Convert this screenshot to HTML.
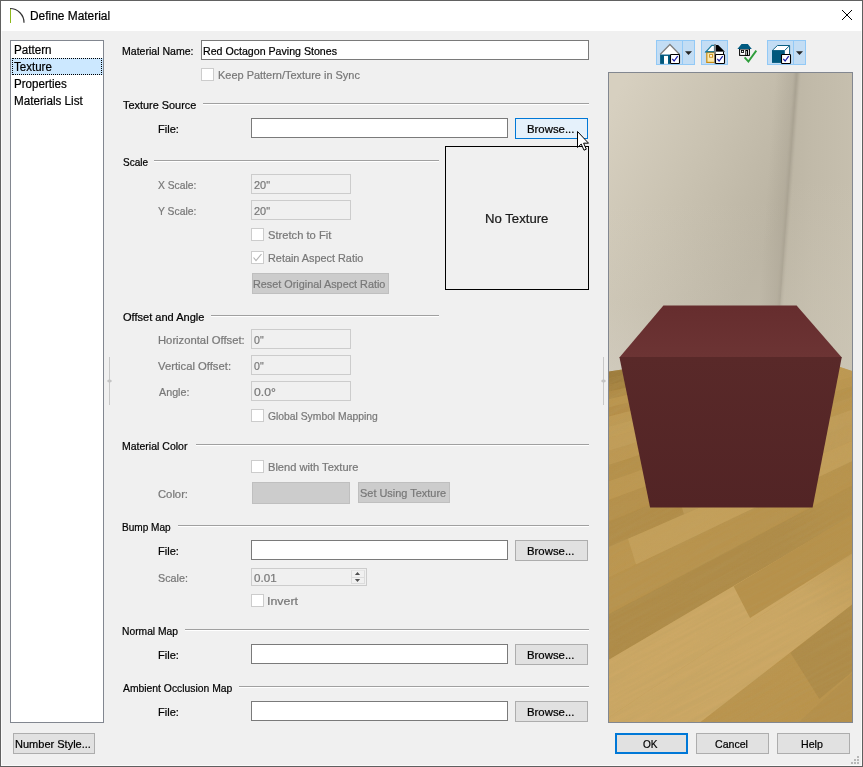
<!DOCTYPE html>
<html><head><meta charset="utf-8"><title>Define Material</title>
<style>
html,body{margin:0;padding:0;background:#f0f0f0;overflow:hidden}
body{width:863px;height:767px;font-family:"Liberation Sans",sans-serif;}
#win{position:relative;width:863px;height:767px;background:#f0f0f0;overflow:hidden}
.a{position:absolute;box-sizing:border-box}
.t{-webkit-text-stroke:0.22px currentColor;position:absolute;white-space:pre;transform-origin:0 50%;font-family:"Liberation Sans",sans-serif}
.in{background:#fff;border:1px solid #7a7a7a}
.ind{background:#f0f0f0;border:1px solid #ccc}
.cb{width:13px;height:13px;background:#fff;border:1px solid #ccc}
.btn{background:#e1e1e1;border:1px solid #adadad}
.btnd{background:#ccc;border:1px solid #bfbfbf}
.hl{height:1px;background:#a0a0a0;box-shadow:0 1px 0 #fff}
.tb{background:#c3ddf4;border:1px solid #92c9f6}

</style></head>
<body>
<div id="win">
<!-- window frame -->
<div class="a" style="left:0;top:0;width:863px;height:31px;background:#fff"></div>
<div class="a" style="left:0;top:0;width:863px;height:1px;background:#616161"></div>
<div class="a" style="left:0;top:0;width:1px;height:767px;background:#616161"></div>
<div class="a" style="left:862px;top:0;width:1px;height:767px;background:#5f5f5f"></div>
<div class="a" style="left:0;top:766px;width:863px;height:1px;background:#5f5f5f"></div>
<div class="a" style="left:861px;top:31px;width:1px;height:735px;background:#fafafa"></div>
<div class="a" style="left:1px;top:765px;width:861px;height:1px;background:#fafafa"></div>
<div class="a" style="left:1px;top:31px;width:1px;height:735px;background:#fafafa"></div>
<!-- title icon -->
<svg class="a" style="left:8px;top:6px" width="20" height="20" viewBox="8 6 20 20">
<line x1="10.5" y1="9" x2="10.5" y2="23" stroke="#8cb81c" stroke-width="1"/>
<path d="M10 8.5 A14 14 0 0 1 24 22.8" fill="none" stroke="#333" stroke-width="1.2"/>
</svg>
<!-- close X -->
<svg class="a" style="left:840px;top:8px" width="14" height="14" viewBox="840 8 14 14">
<path d="M842 10 L852 20 M852 10 L842 20" stroke="#000" stroke-width="1" fill="none"/>
</svg>
<!-- list box -->
<div class="a" style="left:10px;top:40px;width:94px;height:683px;background:#fff;border:1px solid #828790"></div>
<div class="a" style="left:11px;top:58px;width:92px;height:17px;background:#cce8ff"></div>
<div class="a" style="left:12px;top:58px;width:90px;height:17px;border:1px dotted #000"></div>
<!-- Number style button -->
<div class="a btn" style="left:13px;top:733px;width:82px;height:21px"></div>
<!-- splitters -->
<div class="a" style="left:109px;top:357px;width:1px;height:48px;background:#c8c8c8"></div>
<svg class="a" style="left:106px;top:378px" width="7" height="6" viewBox="106 378 7 6"><polygon points="106.8,381 109.5,379 112.2,381 109.5,383" fill="#c4c4c4"/></svg>
<div class="a" style="left:603px;top:357px;width:1px;height:48px;background:#c8c8c8"></div>
<svg class="a" style="left:600px;top:378px" width="7" height="6" viewBox="600 378 7 6"><polygon points="600.8,381 603.5,379 606.2,381 603.5,383" fill="#c4c4c4"/></svg>
<!-- material name -->
<div class="a in" style="left:201px;top:40px;width:388px;height:20px"></div>
<div class="a cb" style="left:201px;top:68px"></div>
<!-- Texture Source -->
<div class="a hl" style="left:203px;top:103px;width:386px"></div>
<div class="a in" style="left:251px;top:118px;width:257px;height:20px"></div>
<div class="a" style="left:515px;top:118px;width:73px;height:21px;background:#e5f1fb;border:1px solid #0078d7"></div>
<!-- Scale -->
<div class="a hl" style="left:154px;top:160px;width:285px"></div>
<div class="a ind" style="left:251px;top:174px;width:100px;height:20px"></div>
<div class="a ind" style="left:251px;top:200px;width:100px;height:20px"></div>
<div class="a cb" style="left:251px;top:228px"></div>
<div class="a cb" style="left:251px;top:251px"></div>
<svg class="a" style="left:251px;top:251px" width="13" height="13"><path d="M2.5 6.5 L5 9.5 L10.5 3" fill="none" stroke="#b4b4b4" stroke-width="1.15"/></svg>
<div class="a btnd" style="left:252px;top:273px;width:137px;height:21px"></div>
<!-- No texture box -->
<div class="a" style="left:445px;top:146px;width:144px;height:144px;border:1px solid #000"></div>
<!-- Offset and Angle -->
<div class="a hl" style="left:211px;top:315px;width:228px"></div>
<div class="a ind" style="left:251px;top:329px;width:100px;height:20px"></div>
<div class="a ind" style="left:251px;top:355px;width:100px;height:20px"></div>
<div class="a ind" style="left:251px;top:381px;width:100px;height:20px"></div>
<div class="a cb" style="left:251px;top:409px"></div>
<!-- Material Color -->
<div class="a hl" style="left:196px;top:444px;width:393px"></div>
<div class="a cb" style="left:251px;top:460px"></div>
<div class="a btnd" style="left:252px;top:482px;width:98px;height:22px"></div>
<div class="a btnd" style="left:358px;top:482px;width:92px;height:21px"></div>
<!-- Bump Map -->
<div class="a hl" style="left:178px;top:525px;width:411px"></div>
<div class="a in" style="left:251px;top:540px;width:257px;height:20px"></div>
<div class="a btn" style="left:515px;top:540px;width:73px;height:21px"></div>
<div class="a ind" style="left:251px;top:568px;width:116px;height:18px"></div>
<div class="a" style="left:351px;top:570px;width:14px;height:14px;border:1px solid #dcdcdc;border-top-color:#e6e6e6"></div>
<div class="a" style="left:352px;top:577px;width:12px;height:1px;background:#dcdcdc"></div>
<svg class="a" style="left:351px;top:568px" width="14" height="18" viewBox="351 568 14 18"><path d="M354.9 575 L360.1 575 L357.5 571.9 Z M354.9 579 L360.1 579 L357.5 582.1 Z" fill="#505050"/></svg>
<div class="a cb" style="left:251px;top:594px"></div>
<!-- Normal Map -->
<div class="a hl" style="left:185px;top:629px;width:404px"></div>
<div class="a in" style="left:251px;top:644px;width:257px;height:20px"></div>
<div class="a btn" style="left:515px;top:644px;width:73px;height:21px"></div>
<!-- AO Map -->
<div class="a hl" style="left:239px;top:686px;width:350px"></div>
<div class="a in" style="left:251px;top:701px;width:257px;height:20px"></div>
<div class="a btn" style="left:515px;top:701px;width:73px;height:21px"></div>
<!-- bottom buttons -->
<div class="a" style="left:615px;top:733px;width:73px;height:21px;background:#e1e1e1;border:2px solid #0078d7"></div>
<div class="a btn" style="left:696px;top:733px;width:73px;height:21px"></div>
<div class="a btn" style="left:777px;top:733px;width:73px;height:21px"></div>
<!-- size grip -->
<svg class="a" style="left:850px;top:755px" width="11" height="11" viewBox="850 755 11 11" shape-rendering="crispEdges">
<g fill="#b8b8b8"><rect x="857" y="756" width="2" height="2"/><rect x="854" y="759" width="2" height="2"/><rect x="857" y="759" width="2" height="2"/><rect x="851" y="762" width="2" height="2"/><rect x="854" y="762" width="2" height="2"/><rect x="857" y="762" width="2" height="2"/></g>
</svg>
<!-- toolbar -->
<div class="a tb" style="left:656px;top:40px;width:39px;height:25px"></div>
<div class="a" style="left:682px;top:40px;width:1px;height:25px;background:#92c9f6"></div>
<div class="a tb" style="left:701px;top:40px;width:27px;height:25px"></div>
<div class="a tb" style="left:767px;top:40px;width:39px;height:25px"></div>
<div class="a" style="left:793px;top:40px;width:1px;height:25px;background:#92c9f6"></div>
<svg class="a" style="left:650px;top:36px" width="160" height="32" viewBox="650 36 160 32">
<path d="M660.1 54.4 L669.9 44.5 L679.6 54.4 Z" fill="#fff"/>
<path d="M660.1 54.5 L669.9 44.5 L679.6 54.5" fill="none" stroke="#808080" stroke-width="1.3" stroke-linejoin="miter"/>
<rect x="660.1" y="54.6" width="10" height="9.3" fill="#00587d"/>
<rect x="664" y="55.9" width="4" height="8" fill="#fff"/>
<rect x="670.5" y="54.5" width="9" height="9" rx="0.8" fill="#fff" stroke="#000" stroke-width="1.1"/><path d="M672.3 58.8 L674.1 61.0 L677.7 56.1" fill="none" stroke="#1c1ca6" stroke-width="1.2" stroke-linejoin="miter"/>
<path d="M685 51.2 L692 51.2 L688.5 55.0 Z" fill="#262626"/>
<path d="M705.9 51.8 L711.8 45.3 L714.5 45.3 L714.5 51.8 Z" fill="#fff" stroke="#187797" stroke-width="1.2" stroke-linejoin="miter"/>
<rect x="706.8" y="52.5" width="8" height="9.9" fill="#fbeaae" stroke="#c98a12" stroke-width="1.2"/>
<rect x="705.4" y="51.2" width="9.1" height="1.2" fill="#187797"/>
<rect x="709.6" y="54.6" width="3" height="2.6" fill="#fff" stroke="#c98a12" stroke-width="0.9"/>
<path d="M716 45.1 L718.2 45.1 L724.9 51.8 L716 51.8 Z" fill="#000"/>
<rect x="716" y="51.8" width="7.6" height="3" fill="#fff"/>
<rect x="723" y="51.8" width="1" height="3" fill="#000"/>
<rect x="714.2" y="44.1" width="1.7" height="19.5" fill="#7d7d7d"/>
<rect x="715.5" y="54.5" width="9" height="9" rx="0.8" fill="#fff" stroke="#000" stroke-width="1.1"/><path d="M717.3 58.8 L719.1 61.0 L722.7 56.1" fill="none" stroke="#1c1ca6" stroke-width="1.2" stroke-linejoin="miter"/>
<rect x="739.6" y="49" width="9.8" height="6.4" fill="#fff" stroke="#000" stroke-width="1"/>
<path d="M741.5 44.1 L747.8 44.1 L751.8 49.1 L737.4 49.1 Z" fill="#005a80"/>
<rect x="741.5" y="50.45" width="2.1" height="2.1" fill="#fff" stroke="#000" stroke-width="0.85"/>
<rect x="745.8" y="50.5" width="1.7" height="5" fill="#fff" stroke="#000" stroke-width="1"/>
<path d="M744.6 57.3 L748.4 61.6 L756.3 50.6" fill="none" stroke="#2f9e3c" stroke-width="1.9" stroke-linejoin="miter"/>
<path d="M772 50.3 L777.3 45.1 L790 45.1 L790 56 L784.8 56 L784.8 50.3 Z" fill="#fff"/>
<path d="M772.3 50.4 L777.4 45.5 L789.6 45.5 L789.6 56" fill="none" stroke="#0a5f83" stroke-width="1"/>
<path d="M784.8 50.3 L789.6 45.6" fill="none" stroke="#0a5f83" stroke-width="1"/>
<rect x="772" y="50.1" width="12.8" height="12.8" fill="#00587d"/>
<rect x="781.5" y="54.5" width="9" height="9" rx="0.8" fill="#fff" stroke="#000" stroke-width="1.1"/><path d="M783.3 58.8 L785.1 61.0 L788.7 56.1" fill="none" stroke="#1c1ca6" stroke-width="1.2" stroke-linejoin="miter"/>
<path d="M796 51.2 L803 51.2 L799.5 55.0 Z" fill="#262626"/>
</svg>
<svg class="a" style="left:608px;top:72px" width="245" height="651" viewBox="608 72 245 651">
<defs>
<linearGradient id="wl" gradientUnits="userSpaceOnUse" x1="609" y1="110" x2="790" y2="200"><stop offset="0" stop-color="#d7d0c0"/><stop offset="0.5" stop-color="#c9c2b1"/><stop offset="1" stop-color="#bab3a2"/></linearGradient>
<linearGradient id="wl2" gradientUnits="userSpaceOnUse" x1="0" y1="200" x2="0" y2="372"><stop offset="0" stop-color="#d9d4c9" stop-opacity="0"/><stop offset="0.6" stop-color="#d9d4c9" stop-opacity="0.15"/><stop offset="1" stop-color="#d9d4c9" stop-opacity="0.5"/></linearGradient>
<linearGradient id="wr" gradientUnits="userSpaceOnUse" x1="785" y1="0" x2="852" y2="0"><stop offset="0" stop-color="#bcb5a4"/><stop offset="0.4" stop-color="#c1baa9"/><stop offset="1" stop-color="#c6bfae"/></linearGradient>
<linearGradient id="wr2" gradientUnits="userSpaceOnUse" x1="0" y1="180" x2="0" y2="372"><stop offset="0" stop-color="#d3cdbe" stop-opacity="0"/><stop offset="1" stop-color="#d3cdbe" stop-opacity="0.4"/></linearGradient>
<linearGradient id="cs" x1="0" y1="0" x2="0" y2="1"><stop offset="0" stop-color="#a59e8e" stop-opacity="0.8"/><stop offset="0.6" stop-color="#a59e8e" stop-opacity="0.55"/><stop offset="1" stop-color="#a59e8e" stop-opacity="0.25"/></linearGradient>
<linearGradient id="fl" gradientUnits="userSpaceOnUse" x1="609" y1="372" x2="780" y2="722"><stop offset="0" stop-color="#b7914a"/><stop offset="0.5" stop-color="#bd9750"/><stop offset="1" stop-color="#bc964f"/></linearGradient>
<linearGradient id="ct" gradientUnits="userSpaceOnUse" x1="0" y1="306" x2="0" y2="357"><stop offset="0" stop-color="#662d2e"/><stop offset="1" stop-color="#6c3434"/></linearGradient>
<linearGradient id="cf" gradientUnits="userSpaceOnUse" x1="0" y1="357" x2="0" y2="508"><stop offset="0" stop-color="#592929"/><stop offset="1" stop-color="#522425"/></linearGradient>
<linearGradient id="csl" x1="0" y1="0" x2="1" y2="0"><stop offset="0" stop-color="#a8a191" stop-opacity="0"/><stop offset="1" stop-color="#a8a191" stop-opacity="0.5"/></linearGradient>
<filter id="b3" x="-300%" y="-10%" width="700%" height="120%"><feGaussianBlur stdDeviation="1.3"/></filter>
<linearGradient id="dk" gradientUnits="userSpaceOnUse" x1="609" y1="0" x2="800" y2="0"><stop offset="0" stop-color="#86682f"/><stop offset="0.3" stop-color="#86682f" stop-opacity="0.9"/><stop offset="1" stop-color="#86682f" stop-opacity="0.15"/></linearGradient>
<radialGradient id="mute" gradientUnits="userSpaceOnUse" cx="0" cy="0" r="1" gradientTransform="translate(866 450) scale(95 190)"><stop offset="0" stop-color="#b8934c" stop-opacity="0.65"/><stop offset="0.5" stop-color="#b8934c" stop-opacity="0.5"/><stop offset="1" stop-color="#b8934c" stop-opacity="0"/></radialGradient>
<filter id="grain" x="0" y="0" width="100%" height="100%"><feTurbulence type="fractalNoise" baseFrequency="0.012 0.35" numOctaves="2" seed="7" result="n"/><feColorMatrix in="n" type="matrix" values="0 0 0 0 0.45  0 0 0 0 0.33  0 0 0 0 0.12  0.9 0 0 0 -0.28"/></filter>
<filter id="b2" x="-300%" y="-10%" width="700%" height="120%"><feGaussianBlur stdDeviation="3.2"/></filter>
<filter id="b1" x="-5%" y="-5%" width="110%" height="110%"><feGaussianBlur stdDeviation="0.5"/></filter>
<clipPath id="fc"><polygon points="609,371.5 777,346 852,371 852,722 609,722"/></clipPath>
<clipPath id="pc"><rect x="609" y="73" width="243" height="649"/></clipPath>
</defs>
<g clip-path="url(#pc)">
<rect x="609" y="73" width="243" height="649" fill="#c8c1b0"/>
<polygon points="609,73 797.5,73 777,346 609,372" fill="url(#wl)"/>
<polygon points="609,73 797.5,73 777,346 609,372" fill="url(#wl2)"/>
<polygon points="797.5,73 852,73 852,372 777,346" fill="url(#wr)"/>
<polygon points="797.5,73 852,73 852,372 777,346" fill="url(#wr2)"/>
<g transform="translate(797.5,72) skewX(-4.215)"><rect x="-22" y="-5" width="22" height="290" fill="url(#csl)"/><rect x="-2.2" y="-5" width="3.6" height="290" fill="url(#cs)" filter="url(#b3)"/></g>
<g clip-path="url(#fc)">
<rect x="609" y="340" width="243" height="382" fill="url(#fl)"/>
<g filter="url(#b1)">
<polygon points="1335.0,230.0 -6478.2,1706.0 -6182.7,1706.0" fill="url(#dk)" opacity="0.55"/>
<polygon points="1335.0,230.0 -6182.7,1706.0 -5887.2,1706.0" fill="url(#dk)" opacity="0.55"/>
<polygon points="1335.0,230.0 -5887.2,1706.0 -5591.7,1706.0" fill="url(#dk)" opacity="0.5"/>
<polygon points="1335.0,230.0 -5591.7,1706.0 -5296.2,1706.0" fill="url(#dk)" opacity="0.35"/>
<polygon points="1335.0,230.0 -5296.2,1706.0 -5000.7,1706.0" fill="#96763a" opacity="0.2"/>
<polygon points="1335.0,230.0 -5000.7,1706.0 -4705.2,1706.0" fill="#d8b677" opacity="0.1"/>
<polygon points="1335.0,230.0 -4705.2,1706.0 -4409.7,1706.0" fill="#96763a" opacity="0.08"/>
<polygon points="1335.0,230.0 -4409.7,1706.0 -4114.2,1706.0" fill="#d8b677" opacity="0.22"/>
<polygon points="1335.0,230.0 -4114.2,1706.0 -3818.7,1706.0" fill="#d8b677" opacity="0.32"/>
<polygon points="1335.0,230.0 -3818.7,1706.0 -3523.2,1706.0" fill="#d8b677" opacity="0.3"/>
<polygon points="1335.0,230.0 -3523.2,1706.0 -3227.7,1706.0" fill="#d8b677" opacity="0.15"/>
<polygon points="1335.0,230.0 -3227.7,1706.0 -2932.2,1706.0" fill="#96763a" opacity="0.1"/>
<polygon points="1335.0,230.0 -2932.2,1706.0 -2636.7,1706.0" fill="#d8b677" opacity="0.12"/>
<polygon points="1335.0,230.0 -2636.7,1706.0 -2341.2,1706.0" fill="#96763a" opacity="0.12"/>
<polygon points="1335.0,230.0 -2341.2,1706.0 -2045.7,1706.0" fill="#96763a" opacity="0.28"/>
<polygon points="1335.0,230.0 -1750.2,1706.0 -1454.7,1706.0" fill="#96763a" opacity="0.1"/>
<polygon points="1335.0,230.0 -1454.7,1706.0 -1159.2,1706.0" fill="#96763a" opacity="0.36"/>
<polygon points="1335.0,230.0 -1159.2,1706.0 -863.7,1706.0" fill="#d8b677" opacity="0.55"/>
<polygon points="1335.0,230.0 -863.7,1706.0 -568.2,1706.0" fill="#d8b677" opacity="0.55"/>
<polygon points="1335.0,230.0 -568.2,1706.0 -272.7,1706.0" fill="#96763a" opacity="0.05"/>
<polygon points="1335.0,230.0 -272.7,1706.0 22.8,1706.0" fill="#96763a" opacity="0.18"/>
<polygon points="733.6,586.2 750.0,618.0 870.0,542.2 870.0,504.3" fill="#b7914b"/>
<polygon points="790.4,652.7 819.4,699 870.0,656.9 870.0,590.6" fill="#96763a" opacity="0.3"/>
<rect x="760" y="340" width="100" height="310" fill="url(#mute)"/>
<polygon points="672.0,476.4 870.0,402.8 870.0,433.0 684.0,514.2" fill="#d8b677" opacity="0.3"/>
<g transform="rotate(-28 730 540)"><rect x="400" y="200" width="700" height="700" filter="url(#grain)" opacity="0.5"/></g>
<polygon points="628.0,538.7 870.0,433.0 870.0,452.5 636.0,564.4" fill="#d8b677" opacity="0.28"/>
</g>
</g>
<polygon points="663.4,305.6 796.6,305.6 841.8,357.5 619.4,357.5" fill="url(#ct)"/>
<polygon points="619.4,357 841.8,357 812.6,507.6 650.1,507.6" fill="url(#cf)"/>
</g>
<rect x="608.5" y="72.5" width="244" height="650" fill="none" stroke="#828790" stroke-width="1"/>
</svg>
<!-- cursor -->
<svg class="a" style="left:576px;top:130px" width="14" height="22" viewBox="0 0 14 22">
<path d="M1.5 1.5 L1.5 17.5 L5.2 14 L8 20.2 L10.3 19.2 L7.6 13.2 L12.5 13.2 Z" fill="#fff" stroke="#000" stroke-width="1" stroke-linejoin="miter"/>
</svg>

<span id="title" class="t" style="left:30.00px;top:8.14px;font-size:12px;line-height:16px;color:#000;transform:scaleX(0.9922)">Define Material</span>
<span id="l1" class="t" style="left:13.80px;top:42.14px;font-size:12px;line-height:16px;color:#000;transform:scaleX(0.9720)">Pattern</span>
<span id="l2" class="t" style="left:13.80px;top:59.14px;font-size:12px;line-height:16px;color:#000;transform:scaleX(0.9620)">Texture</span>
<span id="l3" class="t" style="left:13.80px;top:76.14px;font-size:12px;line-height:16px;color:#000;transform:scaleX(0.9650)">Properties</span>
<span id="l4" class="t" style="left:13.80px;top:93.14px;font-size:12px;line-height:16px;color:#000;transform:scaleX(0.9720)">Materials List</span>
<span id="mn" class="t" style="left:122.28px;top:43.99px;font-size:11px;line-height:15px;color:#000;transform:scaleX(0.9593)">Material Name:</span>
<span id="mv" class="t" style="left:203.13px;top:43.99px;font-size:11px;line-height:15px;color:#000;transform:scaleX(0.9651)">Red Octagon Paving Stones</span>
<span id="kp" class="t" style="left:218.28px;top:67.99px;font-size:11px;line-height:15px;color:#787878;transform:scaleX(0.9960)">Keep Pattern/Texture in Sync</span>
<span id="ts" class="t" style="left:122.64px;top:97.99px;font-size:11px;line-height:15px;color:#000;transform:scaleX(0.9911)">Texture Source</span>
<span id="f1" class="t" style="left:158.06px;top:121.99px;font-size:11px;line-height:15px;color:#000;transform:scaleX(1.0083)">File:</span>
<span id="sc" class="t" style="left:122.84px;top:154.99px;font-size:11px;line-height:15px;color:#000;transform:scaleX(0.9110)">Scale</span>
<span id="xs" class="t" style="left:157.91px;top:177.99px;font-size:11px;line-height:15px;color:#787878;transform:scaleX(0.9361)">X Scale:</span>
<span id="xv" class="t" style="left:253.94px;top:177.99px;font-size:11px;line-height:15px;color:#787878;transform:scaleX(0.9924)">20"</span>
<span id="ys" class="t" style="left:157.92px;top:203.99px;font-size:11px;line-height:15px;color:#787878;transform:scaleX(0.9416)">Y Scale:</span>
<span id="yv" class="t" style="left:253.94px;top:203.99px;font-size:11px;line-height:15px;color:#787878;transform:scaleX(0.9924)">20"</span>
<span id="sf" class="t" style="left:267.72px;top:227.99px;font-size:11px;line-height:15px;color:#787878;transform:scaleX(1.0161)">Stretch to Fit</span>
<span id="ra" class="t" style="left:268.38px;top:250.99px;font-size:11px;line-height:15px;color:#787878;transform:scaleX(0.9870)">Retain Aspect Ratio</span>
<span id="ro" class="t" style="left:253.28px;top:276.99px;font-size:11px;line-height:15px;color:#787878;transform:scaleX(0.9839)">Reset Original Aspect Ratio</span>
<span id="oa" class="t" style="left:122.88px;top:309.99px;font-size:11px;line-height:15px;color:#000;transform:scaleX(1.0028)">Offset and Angle</span>
<span id="ho" class="t" style="left:157.94px;top:332.99px;font-size:11px;line-height:15px;color:#787878;transform:scaleX(1.0223)">Horizontal Offset:</span>
<span id="hv" class="t" style="left:253.52px;top:332.99px;font-size:11px;line-height:15px;color:#787878;transform:scaleX(0.9607)">0"</span>
<span id="vo" class="t" style="left:158.47px;top:358.99px;font-size:11px;line-height:15px;color:#787878;transform:scaleX(1.0235)">Vertical Offset:</span>
<span id="vv" class="t" style="left:253.52px;top:358.99px;font-size:11px;line-height:15px;color:#787878;transform:scaleX(0.9607)">0"</span>
<span id="an" class="t" style="left:158.50px;top:384.99px;font-size:11px;line-height:15px;color:#787878;transform:scaleX(0.9763)">Angle:</span>
<span id="av" class="t" style="left:253.90px;top:384.99px;font-size:11px;line-height:15px;color:#787878;transform:scaleX(1.1072)">0.0°</span>
<span id="gs" class="t" style="left:268.16px;top:408.99px;font-size:11px;line-height:15px;color:#787878;transform:scaleX(0.9390)">Global Symbol Mapping</span>
<span id="mc" class="t" style="left:122.28px;top:438.99px;font-size:11px;line-height:15px;color:#000;transform:scaleX(0.9553)">Material Color</span>
<span id="bt" class="t" style="left:267.64px;top:459.99px;font-size:11px;line-height:15px;color:#787878;transform:scaleX(1.0088)">Blend with Texture</span>
<span id="co" class="t" style="left:157.82px;top:486.99px;font-size:11px;line-height:15px;color:#787878;transform:scaleX(1.0223)">Color:</span>
<span id="su" class="t" style="left:359.72px;top:485.99px;font-size:11px;line-height:15px;color:#787878;transform:scaleX(0.9950)">Set Using Texture</span>
<span id="bm" class="t" style="left:122.34px;top:519.99px;font-size:11px;line-height:15px;color:#000;transform:scaleX(0.9153)">Bump Map</span>
<span id="f2" class="t" style="left:158.06px;top:543.99px;font-size:11px;line-height:15px;color:#000;transform:scaleX(1.0083)">File:</span>
<span id="b2" class="t" style="left:526.74px;top:543.99px;font-size:11px;line-height:15px;color:#000;transform:scaleX(1.0337)">Browse...</span>
<span id="b1" class="t" style="left:526.74px;top:121.99px;font-size:11px;line-height:15px;color:#000;transform:scaleX(1.0337)">Browse...</span>
<span id="s2" class="t" style="left:157.74px;top:570.99px;font-size:11px;line-height:15px;color:#787878;transform:scaleX(0.9785)">Scale:</span>
<span id="sv" class="t" style="left:254.08px;top:570.99px;font-size:11px;line-height:15px;color:#787878;transform:scaleX(1.0548)">0.01</span>
<span id="iv" class="t" style="left:267.30px;top:593.99px;font-size:11px;line-height:15px;color:#787878;transform:scaleX(1.1271)">Invert</span>
<span id="nm" class="t" style="left:122.32px;top:623.99px;font-size:11px;line-height:15px;color:#000;transform:scaleX(0.9346)">Normal Map</span>
<span id="f3" class="t" style="left:158.06px;top:647.99px;font-size:11px;line-height:15px;color:#000;transform:scaleX(1.0083)">File:</span>
<span id="b3" class="t" style="left:526.74px;top:647.99px;font-size:11px;line-height:15px;color:#000;transform:scaleX(1.0337)">Browse...</span>
<span id="ao" class="t" style="left:122.78px;top:680.99px;font-size:11px;line-height:15px;color:#000;transform:scaleX(0.9407)">Ambient Occlusion Map</span>
<span id="f4" class="t" style="left:158.06px;top:704.99px;font-size:11px;line-height:15px;color:#000;transform:scaleX(1.0083)">File:</span>
<span id="b4" class="t" style="left:526.74px;top:704.99px;font-size:11px;line-height:15px;color:#000;transform:scaleX(1.0337)">Browse...</span>
<span id="ns" class="t" style="left:15.27px;top:736.99px;font-size:11px;line-height:15px;color:#000;transform:scaleX(1.0013)">Number Style...</span>
<span id="ok" class="t" style="left:643.26px;top:736.99px;font-size:11px;line-height:15px;color:#000;transform:scaleX(0.9142)">OK</span>
<span id="ca" class="t" style="left:714.86px;top:736.99px;font-size:11px;line-height:15px;color:#000;transform:scaleX(0.9626)">Cancel</span>
<span id="he" class="t" style="left:801.48px;top:736.99px;font-size:11px;line-height:15px;color:#000;transform:scaleX(0.9675)">Help</span>
<span id="nt" class="t" style="left:484.80px;top:210.72px;font-size:12.5px;line-height:16.5px;color:#1a1a1a;transform:scaleX(1.0534)">No Texture</span>
</div>
</body></html>
